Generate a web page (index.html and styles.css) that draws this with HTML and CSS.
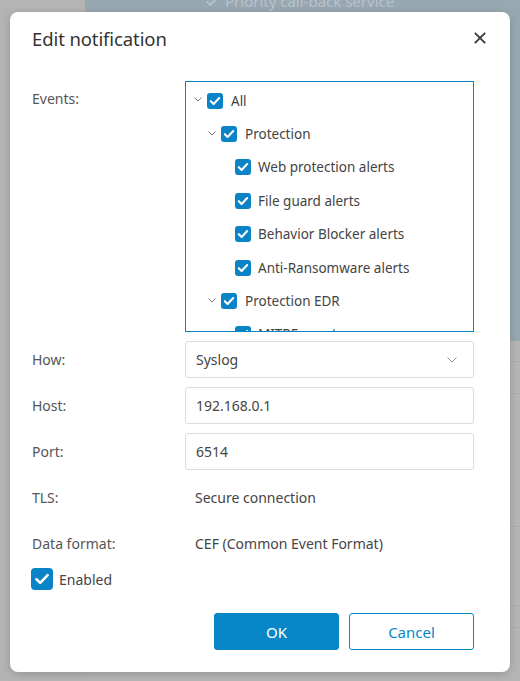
FILE: index.html
```html
<!DOCTYPE html>
<html>
<head>
<meta charset="utf-8">
<link rel="stylesheet" href="styles.css">
</head>
<body>
<div class="page">
  <div class="side"></div>
  <div class="main">
    <div class="panel">
      <div class="panel-item"><svg class="panel-check" viewBox="0 0 16 16"><path d="M2 8.5l4 4 8-8" fill="none" stroke="currentColor" stroke-width="2.2"/></svg>Priority call-back service</div>
    </div>
    <div class="rows">
      <div class="row r1"></div>
      <div class="row r2"></div>
      <div class="row r3"></div>
      <div class="row r4"></div>
      <div class="row r5"></div>
    </div>
  </div>
</div>

<div class="modal">
  <div class="modal-head">
    <h1 class="title">Edit notification</h1>
    <svg class="close" viewBox="0 0 12 12"><path d="M0.8 0.8l10.4 10.4M11.2 0.8L0.8 11.2" stroke="#333" stroke-width="1.7" fill="none"/></svg>
  </div>

  <div class="form">
    <div class="label label-events">Events:</div>
    <div class="tree">
      <div class="node l1"><span class="chev"><svg viewBox="0 0 8 5"><path d="M0.5 0.5l3.5 3.5 3.5-3.5" fill="none" stroke="#7a7a7a" stroke-width="1"/></svg></span><span class="cb"><svg viewBox="0 0 16 16"><path d="M3.8 8.2l2.8 2.7 5.6-5.8" fill="none" stroke="#fff" stroke-width="2.1" stroke-linecap="round" stroke-linejoin="round"/></svg></span><span class="txt">All</span></div>
      <div class="node l2"><span class="chev"><svg viewBox="0 0 8 5"><path d="M0.5 0.5l3.5 3.5 3.5-3.5" fill="none" stroke="#7a7a7a" stroke-width="1"/></svg></span><span class="cb"><svg viewBox="0 0 16 16"><path d="M3.8 8.2l2.8 2.7 5.6-5.8" fill="none" stroke="#fff" stroke-width="2.1" stroke-linecap="round" stroke-linejoin="round"/></svg></span><span class="txt">Protection</span></div>
      <div class="node l3"><span class="cb"><svg viewBox="0 0 16 16"><path d="M3.8 8.2l2.8 2.7 5.6-5.8" fill="none" stroke="#fff" stroke-width="2.1" stroke-linecap="round" stroke-linejoin="round"/></svg></span><span class="txt">Web protection alerts</span></div>
      <div class="node l3"><span class="cb"><svg viewBox="0 0 16 16"><path d="M3.8 8.2l2.8 2.7 5.6-5.8" fill="none" stroke="#fff" stroke-width="2.1" stroke-linecap="round" stroke-linejoin="round"/></svg></span><span class="txt">File guard alerts</span></div>
      <div class="node l3"><span class="cb"><svg viewBox="0 0 16 16"><path d="M3.8 8.2l2.8 2.7 5.6-5.8" fill="none" stroke="#fff" stroke-width="2.1" stroke-linecap="round" stroke-linejoin="round"/></svg></span><span class="txt">Behavior Blocker alerts</span></div>
      <div class="node l3"><span class="cb"><svg viewBox="0 0 16 16"><path d="M3.8 8.2l2.8 2.7 5.6-5.8" fill="none" stroke="#fff" stroke-width="2.1" stroke-linecap="round" stroke-linejoin="round"/></svg></span><span class="txt">Anti-Ransomware alerts</span></div>
      <div class="node l2"><span class="chev"><svg viewBox="0 0 8 5"><path d="M0.5 0.5l3.5 3.5 3.5-3.5" fill="none" stroke="#7a7a7a" stroke-width="1"/></svg></span><span class="cb"><svg viewBox="0 0 16 16"><path d="M3.8 8.2l2.8 2.7 5.6-5.8" fill="none" stroke="#fff" stroke-width="2.1" stroke-linecap="round" stroke-linejoin="round"/></svg></span><span class="txt">Protection EDR</span></div>
      <div class="node l3"><span class="cb"><svg viewBox="0 0 16 16"><path d="M3.8 8.2l2.8 2.7 5.6-5.8" fill="none" stroke="#fff" stroke-width="2.1" stroke-linecap="round" stroke-linejoin="round"/></svg></span><span class="txt">MITRE events</span></div>
    </div>

    <div class="label">How:</div>
    <div class="field select"><span>Syslog</span><svg class="sel-chev" viewBox="0 0 10 6"><path d="M0.5 0.5l4.5 4.5 4.5-4.5" fill="none" stroke="#9a9a9a" stroke-width="1"/></svg></div>

    <div class="label">Host:</div>
    <div class="field">192.168.0.1</div>

    <div class="label">Port:</div>
    <div class="field">6514</div>

    <div class="label">TLS:</div>
    <div class="value">Secure connection</div>

    <div class="label">Data format:</div>
    <div class="value">CEF (Common Event Format)</div>
  </div>

  <div class="enabled">
    <span class="cb big"><svg viewBox="0 0 16 16"><path d="M4 8.2l2.7 2.6 5.4-5.6" fill="none" stroke="#fff" stroke-width="1.9" stroke-linecap="round" stroke-linejoin="round"/></svg></span>
    <span class="enabled-txt">Enabled</span>
  </div>

  <div class="actions">
    <button class="btn primary">OK</button>
    <button class="btn secondary">Cancel</button>
  </div>
</div>
</body>
</html>
```

FILE: styles.css
```css
html, body {
  margin: 0;
  padding: 0;
}
body {
  width: 520px;
  height: 681px;
  overflow: hidden;
  background: #b5b5b5;
  font-family: "Noto Sans", "Open Sans", "DejaVu Sans", sans-serif;
  position: relative;
}
.page {
  display: flex;
  height: 681px;
}
.side {
  width: 85px;
  background: #b4b4b4;
}
.main {
  flex: 1;
  display: flex;
  flex-direction: column;
}
.panel {
  height: 341px;
  background: #98a8b1;
  display: flex;
  justify-content: flex-start;
  padding-left: 120px;
}
.panel-item {
  margin-top: -9px;
  color: #b7c3ca;
  font-size: 15px;
  display: flex;
  align-items: center;
  gap: 6px;
  height: 20px;
}
.panel-check {
  width: 14px;
  height: 14px;
}
.rows {
  display: flex;
  flex-direction: column;
}
.row {
  border-bottom: 1px solid #adadad;
}
.r1 { height: 20px; }
.r2 { height: 31px; }
.r3 { height: 132px; }
.r4 { height: 78px; }
.r5 { height: 21px; }

.modal {
  position: absolute;
  left: 10px;
  top: 12px;
  width: 500px;
  height: 660px;
  box-sizing: border-box;
  background: #fff;
  border-radius: 8px;
  box-shadow: 0 2px 8px rgba(0,0,0,0.18);
  padding: 0 36px 0 22px;
  color: #444;
}
.modal-head {
  display: flex;
  align-items: center;
  justify-content: space-between;
  height: 52px;
  padding-top: 0;
}
.title {
  margin: 0;
  font-weight: 400;
  font-size: 18.5px;
  color: #333;
  letter-spacing: -0.1px;
}
.close {
  width: 12px;
  height: 12px;
  margin-right: -12px;
  margin-top: 0;
}
.form {
  margin-top: 17px;
  display: grid;
  grid-template-columns: 153px 289px;
  row-gap: 9px;
  font-size: 14px;
}
.label {
  font-size: 14px;
  color: #555;
  height: 37px;
  display: flex;
  align-items: center;
}
.label-events {
  align-items: flex-start;
  height: auto;
  padding-top: 8px;
}
.tree {
  height: 251px;
  box-sizing: border-box;
  border: 1px solid #0a84c6;
  overflow: hidden;
  padding-top: 2px;
}
.node {
  height: 33.4px;
  display: flex;
  align-items: center;
  color: #444;
  font-size: 13.5px;
}
.node.l1 { padding-left: 8px; }
.node.l2 { padding-left: 22px; }
.node.l3 { padding-left: 49px; }
.chev {
  width: 8px;
  height: 5px;
  display: flex;
  margin-right: 5px;
  margin-top: -2px;
}
.chev svg { width: 8px; height: 5px; }
.cb {
  width: 16px;
  height: 16px;
  border-radius: 3px;
  background: #0a84c6;
  display: flex;
  flex: none;
}
.cb svg { width: 16px; height: 16px; }
.txt {
  margin-left: 8px;
}
.node.l3 .txt { margin-left: 7px; }
.field {
  height: 37px;
  box-sizing: border-box;
  border: 1px solid #dcdcdc;
  border-radius: 3px;
  display: flex;
  align-items: center;
  padding: 0 10px;
  font-size: 14px;
  color: #444;
}
.select {
  justify-content: space-between;
}
.sel-chev {
  width: 10px;
  height: 6px;
  margin-right: 6px;
}
.value {
  height: 37px;
  display: flex;
  align-items: center;
  padding-left: 10px;
  font-size: 14px;
  color: #444;
}
.enabled {
  margin-top: 6px;
  display: flex;
  align-items: center;
  height: 22px;
  margin-left: -1px;
}
.cb.big {
  width: 22px;
  height: 22px;
  border-radius: 4px;
  background: #0a84c6;
}
.cb.big svg { width: 22px; height: 22px; }
.enabled-txt {
  margin-left: 6px;
  font-size: 14px;
  color: #444;
}
.actions {
  margin-top: 23px;
  display: flex;
  justify-content: flex-end;
  gap: 10px;
}
.btn {
  width: 125px;
  height: 37px;
  border-radius: 3px;
  font-family: inherit;
  font-size: 15px;
  box-sizing: border-box;
  cursor: pointer;
}
.primary {
  background: #0787c7;
  border: 1px solid #0787c7;
  color: #fff;
}
.secondary {
  background: #fff;
  border: 1px solid #0787c7;
  color: #0787c7;
}
```
